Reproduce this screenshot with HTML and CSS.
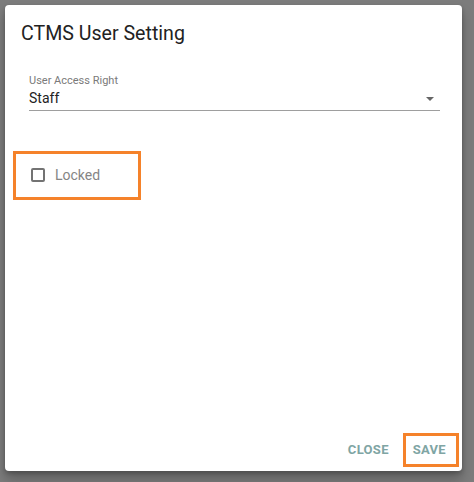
FILE: index.html
```html
<!DOCTYPE html>
<html>
<head>
<meta charset="utf-8">
<link rel="stylesheet" href="styles.css">
</head>
<body>
<div class="dialog">
  <h2 class="title">CTMS User Setting</h2>
  <div class="content">
    <div class="field">
      <div class="label">User Access Right</div>
      <div class="select">
        <span class="value">Staff</span>
        <span class="arrow"></span>
      </div>
    </div>
    <label class="check-row">
      <span class="box"></span>
      <span class="check-text">Locked</span>
      <span class="mark mark-locked"></span>
    </label>
  </div>
  <div class="actions">
    <button class="btn"><span class="btn-text">CLOSE</span></button>
    <button class="btn"><span class="btn-text">SAVE<span class="mark mark-save"></span></span></button>
  </div>
</div>
</body>
</html>
```
FILE: styles.css
```css
html, body {
  margin: 0;
  padding: 0;
  background: #7c7c7c;
  font-family: Roboto, "Liberation Sans", sans-serif;
}
body {
  width: 474px;
  height: 482px;
  overflow: hidden;
  padding: 5px 0 0 5px;
  box-sizing: border-box;
}
.dialog {
  width: 457px;
  height: 466px;
  background: #fff;
  border-radius: 4px;
  box-shadow: 0 8px 12px rgba(0,0,0,0.25), 0 2px 4px rgba(0,0,0,0.2);
  box-sizing: border-box;
  padding: 13px 0 0 0;
  display: flex;
  flex-direction: column;
}
.title {
  margin: 0;
  padding: 0 16px;
  font-size: 19.6px;
  font-weight: 400;
  line-height: 32px;
  color: #222;
}
.content {
  flex: 1;
  padding: 0 22px 0 24px;
}
.field {
  margin-top: 24px;
}
.label {
  font-size: 11px;
  line-height: 13px;
  color: #7a7a7a;
  height: 14px;
}
.select {
  display: flex;
  align-items: center;
  justify-content: space-between;
  border-bottom: 1px solid #9e9e9e;
  padding-bottom: 2px;
}
.value {
  font-size: 14px;
  line-height: 20px;
  color: #222;
}
.arrow {
  width: 0;
  height: 0;
  border-left: 4.5px solid transparent;
  border-right: 4.5px solid transparent;
  border-top: 4.5px solid #666;
  margin-right: 6px;
  margin-top: 1px;
}
.check-row {
  position: relative;
  display: flex;
  align-items: center;
  margin-top: 54px;
  height: 20px;
  width: 100px;
}
.box {
  width: 14px;
  height: 14px;
  box-sizing: border-box;
  border: 2px solid #737373;
  border-radius: 2px;
  margin-left: 2px;
}
.check-text {
  margin-left: 10px;
  font-size: 14px;
  line-height: 20px;
  color: #858585;
}
.mark {
  position: absolute;
  border: 3px solid #f5822a;
  box-sizing: border-box;
}
.mark-locked {
  left: -16px;
  top: -14px;
  width: 128px;
  height: 49px;
}
.actions {
  display: flex;
  justify-content: flex-end;
  gap: 8px;
  padding: 0 8px 11px 0;
}
.btn {
  background: none;
  border: none;
  padding: 0 8px;
  font-family: Roboto, "Liberation Sans", sans-serif;
  font-size: 13px;
  font-weight: 700;
  letter-spacing: 0.3px;
  line-height: 20px;
  color: #7fa5a4;
}
.btn-text {
  position: relative;
  display: block;
}
.mark-save {
  left: -10px;
  right: -13px;
  top: -7px;
  bottom: -7px;
}
```
